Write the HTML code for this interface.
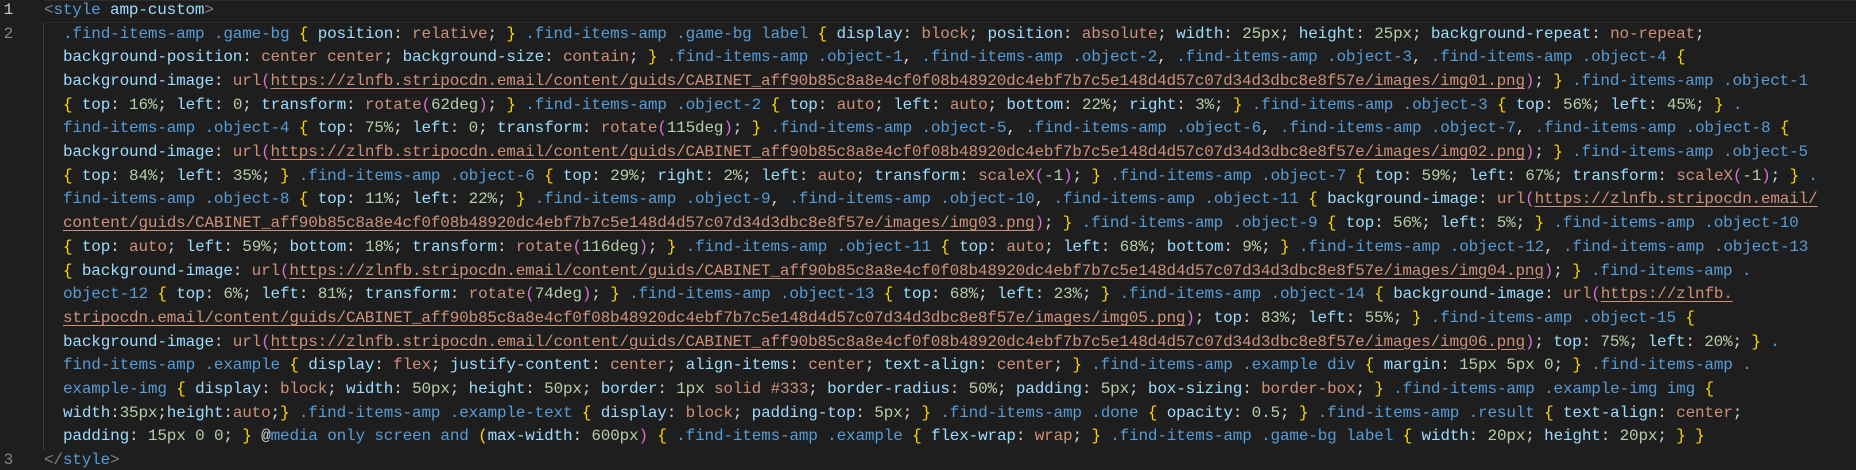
<!DOCTYPE html>
<html><head><meta charset="utf-8"><style>
html,body{margin:0;padding:0;background:#1e1e1e;width:1856px;height:470px;overflow:hidden}
#ed{position:relative;font-family:"Liberation Mono",monospace;font-size:16px;letter-spacing:-0.17px;line-height:23.68px;color:#d4d4d4}
.row{position:absolute;left:63px;white-space:pre;height:23.68px}
.ln{position:absolute;left:0;width:13px;text-align:right;color:#858585;white-space:pre}
.cur{position:absolute;left:44px;right:0;top:0;height:21px;border-bottom:1px solid #2c2c2c;border-top:1px solid #2c2c2c}
.guide{position:absolute;left:43px;top:23px;height:427px;width:1px;background:#404040}
.s{color:#569cd6}.p{color:#9cdcfe}.v{color:#ce9178}.n{color:#b5cea8}.b{color:#ffd700}.pa{color:#da70d6}.u{color:#ce9178;text-decoration:underline;text-underline-offset:3px}.g{color:#808080}
</style></head><body><div id="ed">
<div class="cur"></div><div class="guide"></div>
<div class="ln" style="top:-1px;color:#c6c6c6">1</div>
<div class="ln" style="top:22.7px">2</div>
<div class="ln" style="top:449px">3</div>
<div class="row" style="left:44px;top:-1px"><span class="g">&lt;</span><span class="s">style</span> <span class="p">amp-custom</span><span class="g">&gt;</span></div>
<div class="row" style="left:44px;top:449px"><span class="g">&lt;/</span><span class="s">style</span><span class="g">&gt;</span></div>
<div class="row c">.find-items-amp .game-bg { position: relative; } .find-items-amp .game-bg label { display: block; position: absolute; width: 25px; height: 25px; background-repeat: no-repeat;</div>
<div class="row c">background-position: center center; background-size: contain; } .find-items-amp .object-1, .find-items-amp .object-2, .find-items-amp .object-3, .find-items-amp .object-4 {</div>
<div class="row c">background-image: url(https://zlnfb.stripocdn.email/content/guids/CABINET_aff90b85c8a8e4cf0f08b48920dc4ebf7b7c5e148d4d57c07d34d3dbc8e8f57e/images/img01.png); } .find-items-amp .object-1</div>
<div class="row c">{ top: 16%; left: 0; transform: rotate(62deg); } .find-items-amp .object-2 { top: auto; left: auto; bottom: 22%; right: 3%; } .find-items-amp .object-3 { top: 56%; left: 45%; } .</div>
<div class="row c">find-items-amp .object-4 { top: 75%; left: 0; transform: rotate(115deg); } .find-items-amp .object-5, .find-items-amp .object-6, .find-items-amp .object-7, .find-items-amp .object-8 {</div>
<div class="row c">background-image: url(https://zlnfb.stripocdn.email/content/guids/CABINET_aff90b85c8a8e4cf0f08b48920dc4ebf7b7c5e148d4d57c07d34d3dbc8e8f57e/images/img02.png); } .find-items-amp .object-5</div>
<div class="row c">{ top: 84%; left: 35%; } .find-items-amp .object-6 { top: 29%; right: 2%; left: auto; transform: scaleX(-1); } .find-items-amp .object-7 { top: 59%; left: 67%; transform: scaleX(-1); } .</div>
<div class="row c">find-items-amp .object-8 { top: 11%; left: 22%; } .find-items-amp .object-9, .find-items-amp .object-10, .find-items-amp .object-11 { background-image: url(https://zlnfb.stripocdn.email/</div>
<div class="row c">content/guids/CABINET_aff90b85c8a8e4cf0f08b48920dc4ebf7b7c5e148d4d57c07d34d3dbc8e8f57e/images/img03.png); } .find-items-amp .object-9 { top: 56%; left: 5%; } .find-items-amp .object-10</div>
<div class="row c">{ top: auto; left: 59%; bottom: 18%; transform: rotate(116deg); } .find-items-amp .object-11 { top: auto; left: 68%; bottom: 9%; } .find-items-amp .object-12, .find-items-amp .object-13</div>
<div class="row c">{ background-image: url(https://zlnfb.stripocdn.email/content/guids/CABINET_aff90b85c8a8e4cf0f08b48920dc4ebf7b7c5e148d4d57c07d34d3dbc8e8f57e/images/img04.png); } .find-items-amp .</div>
<div class="row c">object-12 { top: 6%; left: 81%; transform: rotate(74deg); } .find-items-amp .object-13 { top: 68%; left: 23%; } .find-items-amp .object-14 { background-image: url(https://zlnfb.</div>
<div class="row c">stripocdn.email/content/guids/CABINET_aff90b85c8a8e4cf0f08b48920dc4ebf7b7c5e148d4d57c07d34d3dbc8e8f57e/images/img05.png); top: 83%; left: 55%; } .find-items-amp .object-15 {</div>
<div class="row c">background-image: url(https://zlnfb.stripocdn.email/content/guids/CABINET_aff90b85c8a8e4cf0f08b48920dc4ebf7b7c5e148d4d57c07d34d3dbc8e8f57e/images/img06.png); top: 75%; left: 20%; } .</div>
<div class="row c">find-items-amp .example { display: flex; justify-content: center; align-items: center; text-align: center; } .find-items-amp .example div { margin: 15px 5px 0; } .find-items-amp .</div>
<div class="row c">example-img { display: block; width: 50px; height: 50px; border: 1px solid #333; border-radius: 50%; padding: 5px; box-sizing: border-box; } .find-items-amp .example-img img {</div>
<div class="row c">width:35px;height:auto;} .find-items-amp .example-text { display: block; padding-top: 5px; } .find-items-amp .done { opacity: 0.5; } .find-items-amp .result { text-align: center;</div>
<div class="row c">padding: 15px 0 0; } @media only screen and (max-width: 600px) { .find-items-amp .example { flex-wrap: wrap; } .find-items-amp .game-bg label { width: 20px; height: 20px; } }</div>
</div>
<script>
(function(){
var rows=document.querySelectorAll('.row.c');
var inUrl=false,val=false;
function esc(s){return s.replace(/&/g,'&amp;').replace(/</g,'&lt;').replace(/>/g,'&gt;');}
function sp(c,t){return '<span class="'+c+'">'+esc(t)+'</span>';}
for(var r=0;r<rows.length;r++){
 var el=rows[r];el.style.top=(22.7+23.68*r)+'px';
 var t=el.textContent,o='',i=0;
 while(i<t.length){
  if(inUrl){var j=t.indexOf(')',i);if(j<0){o+=sp('u',t.slice(i));i=t.length;}else{o+=sp('u',t.slice(i,j))+sp('pa',')');i=j+1;inUrl=false;}continue;}
  var c=t[i];
  if(t.substr(i,4)==='url('){o+=sp('v','url')+sp('pa','(');i+=4;inUrl=true;continue;}
  if(c==='{'||c==='}'){o+=sp('b',c);val=false;i++;continue;}
  if(c===';'){o+=esc(c);val=false;i++;continue;}
  if(c==='('||c===')'){o+=sp(val?'pa':'b',c);i++;continue;}
  if(c===' '||c===','){o+=c;i++;continue;}
  if(c===':'){o+=c;val=true;i++;continue;}
  if(c==='@'){o+=c;i++;continue;}
  var m=t.slice(i).match(/^[^\s;:{}(),@]+/);var w=m?m[0]:c;
  if(val){o+=sp(/^-?[\d.]+(px|%|deg)?$/.test(w)?'n':'v',w);}
  else{o+=sp(t[i+w.length]===':'?'p':'s',w);}
  i+=w.length;
 }
 el.innerHTML=o;
}
})();
</script>
</body></html>
